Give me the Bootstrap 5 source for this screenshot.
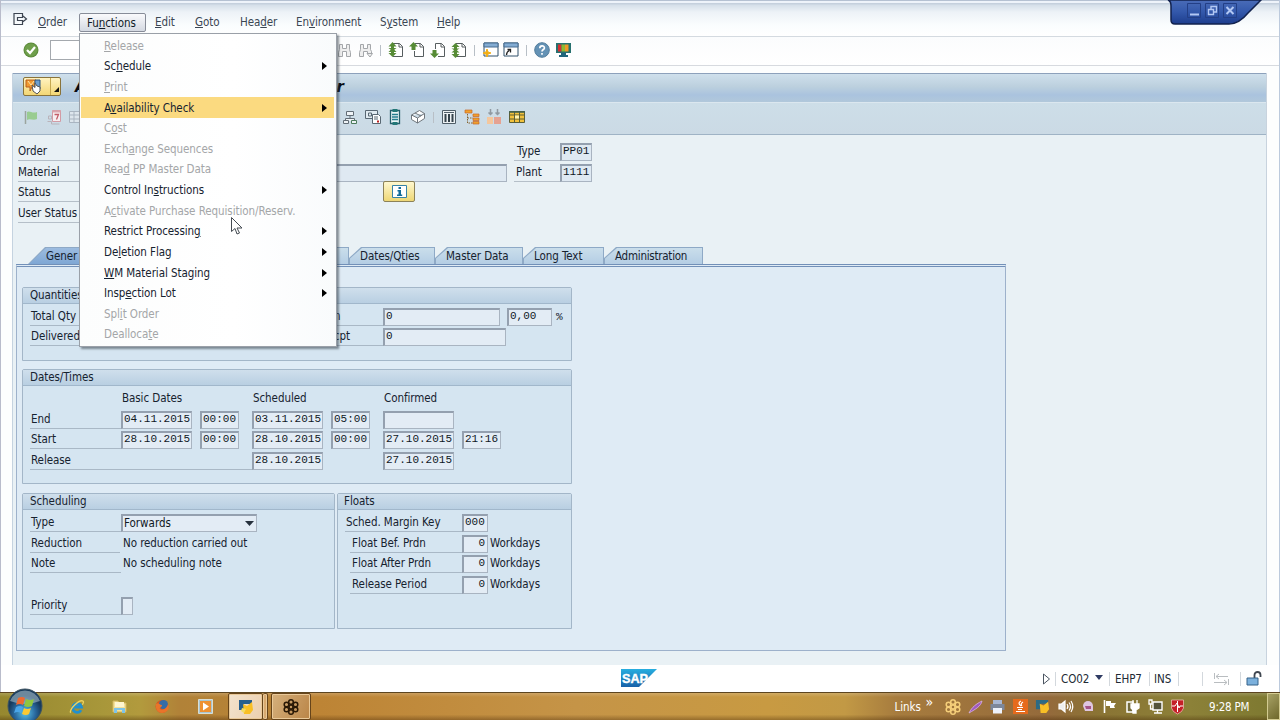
<!DOCTYPE html>
<html lang="en">
<head>
<meta charset="utf-8">
<meta name="viewport" content="width=device-width, initial-scale=1">
<title>Production Order</title>
<link href="https://cdn.jsdelivr.net/npm/bootstrap@5.3.0/dist/css/bootstrap.min.css" rel="stylesheet">
<style>
:root{--rh:20.62px;--line:#a3b6c8}
body{width:1280px;height:720px;overflow:hidden;background:#fdfefe;color:#16222f;font-family:"DejaVu Sans Condensed","DejaVu Sans",sans-serif;font-stretch:condensed;font-size:11.5px;letter-spacing:-.07px;line-height:16px;white-space:nowrap}
svg{display:block;flex:none;overflow:visible}
u{text-underline-offset:1px;text-decoration-thickness:1px}
.win{width:1280px;height:692px;border-left:1px solid #b9bccb;border-right:1px solid #bccadd}
.menustrip{height:37px;padding:10px 0 0 11px;background:linear-gradient(#b5c1d2 0 1px,#eef3fa 1px 3px,#c5d0dd 3px 4px,#d5dfe9 5px,#edf2f7 12px,#fafdfe 25px,#fff);border-bottom:1px solid #d4dae0;grid-template-columns:26px 41px 76px 40px 45px 56px 84px 57px 60px;display:grid;align-content:start;color:#3a4653}
.menustrip>span{padding-top:4px}
.menustrip .open{margin:3px 9px 0 0;padding:1px 0 0 7px;height:19px;line-height:17px;border:1px solid #878c98;border-radius:2px;background:linear-gradient(#fafafc,#d4d9e2);color:#111b28}
.toolstrip{height:29px;padding-bottom:2px;background:linear-gradient(#fbfcfd,#fff);border-bottom:1px solid #d7dadf}
.okcode{width:60px;height:20px;border:1px solid #a5a9ae;background:#fff}
.c1{width:20.8px}.c2{width:22.6px}.c1,.c2{display:flex;justify-content:center;flex:none}
.sep1{width:10.5px}.sep2{width:8.5px}
.sep1,.sep2{display:flex;justify-content:center;flex:none}
.sep1::after,.sep2::after{content:"";width:1px;height:11px;background:#b8bfc6}
.sheet{width:1255px;height:592px;margin:7px 0 0 11px;border-left:1px solid #c5d3e0;border-right:1px solid #c8d3de;background:#e9f1f5}
.caption-bar{height:30px;border-top:1px solid #8da1bb;background:linear-gradient(#cfe0ec,#bcd0de 45%,#aac3de 75%,#b1c8db);border-bottom:1px solid #dbe7ef}
.caption-bar i{font:italic bold 15px "DejaVu Sans","DejaVu Sans Condensed",sans-serif;color:#070b12;line-height:26px}
.appbar{height:32px;padding-bottom:3px;background:linear-gradient(#cddee8,#cbdae5);border-bottom:1px solid #9fb3c5}
.gos{width:38px;height:19px;border:1px solid #89733b;border-radius:2px;background:linear-gradient(#fff3c0,#f3d675)}
.gos>span{border-left:1px solid #c5a850;width:11px}
.frow{display:flex;height:var(--rh);align-items:flex-end}
.lab{height:18px;line-height:17px;border-bottom:1px solid #a9b8c6;flex:none;padding-left:1px}
.txt{line-height:17px;margin-bottom:1px}
.head-form .lab{border-color:#b5bfc8}
.fld{height:18px;border:1px solid #a9b4c1;border-top:2px solid #94a0af;border-left:2px solid #94a0af;background:#e3ecf5;flex:none;font:11px/13px "Liberation Mono",monospace;letter-spacing:0;padding-left:1px;color:#10181f}
.head-form .fld{background:#dfe9f2}
.w-date{width:71px}.w-time{width:39px}
.info{width:32px;height:21px;border:1px solid #8c8258;border-radius:2px;background:linear-gradient(#fff8cf,#eed775)}
.tabstrip{height:17px;padding-left:15px}
.tb{position:relative;height:17px;line-height:19px;z-index:0}
.tb::before,.tb::after{content:"";position:absolute;inset:0;clip-path:polygon(0 100%,0 65%,12px 0,100% 0,100% 100%);background:#8ea9c6;z-index:-2}
.tb::after{inset:1px 1px 0 1px;background:linear-gradient(#cadeeb,#b4cde4);z-index:-1}
.tb.on::before,.tb.on::after{clip-path:polygon(0 100%,17px 0,100% 0,100% 100%)}
.tb.on::after{background:linear-gradient(#9cbce0,#7fa7d4)}
.pane{width:990px;height:387px;margin-left:3px;border:1px solid #9db1cb;border-top:3px double #7290b8;background:#dfebf5;padding:20px 0 0 5px}
.grp{border:1px solid var(--line);border-radius:2px 2px 0 0;background:#d5e5f1}
.grp>h6{margin:0;height:16px;font-size:inherit;font-weight:400;line-height:14px;padding-left:7px;background:linear-gradient(#cfdfec,#b9cfe2);border-bottom:1px solid #a1b7cb}
.grp .frow{padding-left:7px}
.status{height:27px;background:#fff;display:grid;grid-template-columns:12px 54px 40px 29px 24px 38px 26px;justify-content:end;align-content:center;align-items:center;padding-right:13px;color:#222a35}
.statusrow{height:27px;background:#fff}
.st{border-left:1px solid #d3d8dd;height:14px;display:flex;align-items:center;padding-left:5px}
.pop{position:absolute;left:79px;top:33px;width:258px;height:314px;border:1px solid #9aa0a8;background:linear-gradient(90deg,#fcfdfd,#fff 60%,#f9fbfc);box-shadow:2px 2px 2px rgba(50,60,70,.55);padding:1.500px 2px 0 1px;z-index:5}
.pop>div{height:var(--rh);line-height:20px;padding:0 7px 0 23px;display:flex;justify-content:space-between;align-items:center}
.pop>div.off{color:#a4a6a8}
.pop>div.hot{background:#fbda80}
.pop .sub::after{content:"";border:4px solid transparent;border-left:5px solid #000;border-right:0}
.cursor{position:absolute;left:231px;top:217px;z-index:6}
.wctl{position:absolute;left:1168px;top:0;z-index:6}
.taskbar-os{position:relative;height:28px;border-top:1px solid #5c4520;background:linear-gradient(rgba(255,255,255,.18),rgba(255,255,255,0) 15% 80%,rgba(60,30,0,.35)),linear-gradient(90deg,#96882f,#a8973a 8%,#b29a3d 11%,#b18238 14%,#bd8435 25%,#c59447 45%,#c89a42 60%,#c29945 66%,#a77c3e 70%,#946a3b 82%,#8a7434 86%,#8c8138 93%,#7c7830)}
.tk{width:42.8px;display:flex;justify-content:center;align-items:center}
.tbtn{height:27px;border:1px solid #66441a;border-radius:2px;box-shadow:inset 0 0 0 1px #e9c999;display:flex;align-items:center;justify-content:center}
.tray>span{width:22.5px;display:flex;justify-content:center}
.orb{position:absolute;left:7px;top:-5px}
</style>
</head>
<body>
<div class="win">
 <nav class="menustrip">
  <svg width="15" height="13" viewBox="0 0 15 13" style="margin:3px 0 0 1px" fill="none" stroke="#3d4551" stroke-width="1.2"><path d="M9.500 3V.5H1v11h8.500V9M4.500 4.500h5V2.500L13.500 6 9.500 9V7.500h-5z"/></svg>
  <span><u>O</u>rder</span><span class="open">Fu<u>n</u>ctions</span><span><u>E</u>dit</span><span><u>G</u>oto</span><span>Hea<u>d</u>er</span><span>En<u>v</u>ironment</span><span>S<u>y</u>stem</span><span><u>H</u>elp</span>
 </nav>
 <div class="toolstrip d-flex align-items-center">
  <svg width="16" height="16" viewBox="0 0 16 16" style="margin-right:11px;margin-left:22px"><circle cx="8" cy="8" r="7.500" fill="#5d8b3c"/><circle cx="8" cy="8" r="6.500" fill="#6f9f4b"/><path d="M4 8l3 3 5-6" fill="none" stroke="#fff" stroke-width="2.200"/></svg>
  <div class="okcode"></div>
  <div class="d-flex align-items-center" style="margin-left:224px">
   <span class="c1"><svg width="15" height="15" viewBox="0 0 15 15" fill="#eee" stroke="#a4a7aa"><path d="M2.500 1.500h3v4h4v-4h3v5l1 3v4h-4v-5h-4v5h-4v-4l1-3z"/></svg></span>
   <span class="c1"><svg width="15" height="15" viewBox="0 0 15 15" fill="#eee" stroke="#a4a7aa"><path d="M2.500 1.500h3v4h4v-4h3v5l1 2v2h-4v-2h-4v5h-4v-4l1-3zM9 10.500h5.500L12 14z"/></svg></span>
   <span class="sep1"></span>
   <span class="c1"><svg width="16" height="16" viewBox="0 0 16 16"><path d="M5 1.500h6.500l3 3v10H5" fill="#fff" stroke="#565d5f"/><path d="M11 1.500v3.500h3.500" fill="none" stroke="#565d5f"/><path d="M4.500 0L8.500 4.500H6v1.500h2.500L4.500 9 .5 6H3V4.500H.5zM4.500 6L8.500 10H6v1h2.500L4.500 15l-4-4H3v-1H.5z" fill="#568b35"/></svg></span>
   <span class="c1"><svg width="16" height="16" viewBox="0 0 16 16"><path d="M6 1.500h5.500l3 3v10h-9V9" fill="#fff" stroke="#565d5f"/><path d="M11 1.500v3.500h3.500" fill="none" stroke="#565d5f"/><path d="M4.500 0L9 4.500H6.500V8h-4V4.500H0z" fill="#568b35"/></svg></span>
   <span class="c1"><svg width="16" height="16" viewBox="0 0 16 16"><path d="M5.500 7V1.500h6l3 3v10H8" fill="#fff" stroke="#565d5f"/><path d="M11 1.500v3.500h3.500" fill="none" stroke="#565d5f"/><path d="M4.500 16L9 11.500H6.500V8h-4v3.500H0z" fill="#568b35"/></svg></span>
   <span class="c1"><svg width="16" height="16" viewBox="0 0 16 16"><path d="M5 1.500h6.500l3 3v10H5" fill="#fff" stroke="#565d5f"/><path d="M11 1.500v3.500h3.500" fill="none" stroke="#565d5f"/><path d="M4.500 1L8.500 5H6v1.500h2.500L4.500 9 .5 6.500H3V5H.5zM4.500 7l4 3.500H6V12h2.500l-4 4-4-4H3v-1.500H.5z" fill="#568b35"/></svg></span>
   <span class="sep1"></span>
   <span class="c1"><svg width="17" height="16" viewBox="0 0 17 16"><path d="M2 1h14v13H2z" fill="#fff" stroke="#30516b"/><path d="M2 1h14v4H2z" fill="#83acd3" stroke="#466d91"/><path d="M5 7l1 3 3 1-3 1-1 3-1-3-3-1 3-1z" fill="#f2ae16" stroke="#f2ae16"/></svg></span>
   <span class="c1"><svg width="17" height="16" viewBox="0 0 17 16"><path d="M2 1h14v13H2z" fill="#fff" stroke="#30516b"/><path d="M2 1h14v4H2z" fill="#83acd3" stroke="#466d91"/><path d="M4.500 13c0-2 .5-3.500 3-4.500M5.500 7.500H8.500v3" fill="none" stroke="#222" stroke-width="1.300"/></svg></span>
   <span class="sep1"></span>
   <span class="c1"><svg width="16" height="16" viewBox="0 0 16 16"><circle cx="8" cy="8" r="7.300" fill="#6492b5" stroke="#527d9c"/><path d="M5.800 6.200c0-3 4.600-3 4.600-.3C10.400 7.600 8 7.500 8 9.600M8 11v1.800" fill="none" stroke="#fff" stroke-width="1.700"/></svg></span>
   <span class="c1"><svg width="17" height="16" viewBox="0 0 17 16"><path d="M1 1h15v10H1z" fill="#27716f"/><path d="M3 2.500h3.500v7H3z" fill="#d82f31"/><path d="M6.500 2.500H10v7H6.500z" fill="#8db834"/><path d="M10 2.500h3.500v7H10z" fill="#ef9a27"/><path d="M6 11h5v2h2v2H4v-2h2z" fill="#20657c"/></svg></span>
  </div>
 </div>

 <main class="sheet">
  <div class="caption-bar d-flex">
   <div class="gos d-flex" style="margin:3px 14px 0 10px"><svg width="26" height="17" viewBox="0 0 26 17"><path d="M2 2h10v7H8l-2 4V9H2z" fill="#f19a31" stroke="#b85f1d"/><path d="M4 3l3 4 3-4" fill="none" stroke="#fbe3a8"/><path d="M11 2h5v9h-5z" fill="#6d9fd0" stroke="#2f5680"/><path d="M8 7l3 2.500V5l2 3 3 1v4l-3 3-4-3z" fill="#fff" stroke="#555"/></svg><span class="d-flex"><svg width="10" height="17"><path d="M8 9v5H3z" fill="#111"/></svg></span></div>
   <i>A</i><i style="margin-left:250px">r</i>
  </div>
  <div class="appbar d-flex align-items-center">
   <div class="d-flex" style="margin-left:7px;width:319px">
    <span class="c2"><svg width="16" height="16" viewBox="0 0 16 16"><path d="M2.500 2v13" stroke="#9ba49e" stroke-width="1.500"/><path d="M4 3c3-2 5 2 10 0v7c-4 2-7-1-10 1z" fill="#99cc91"/></svg></span>
    <span class="c2"><svg width="16" height="16" viewBox="0 0 16 16"><path d="M6.500 1.500h8v11h-8z" fill="#f7eff1" stroke="#d29ba5"/><path d="M6.500 1.500h8v2h-8z" fill="#dba4ac"/><path d="M8.500 5.500h4l-2 5" fill="none" stroke="#c35e68" stroke-width="1.300"/><path d="M2.500 7h3v3h-3zM1.500 12.500h4v2.500h8" fill="none" stroke="#b9b3ba"/></svg></span>
    <span class="c2"><svg width="16" height="16" viewBox="0 0 16 16" fill="#dde6ed" stroke="#a9b5c1"><path d="M1.500 2.500h13v11h-13zM1.500 6h13M1.500 10h13M6 2.500v11"/></svg></span>
   </div>
   <span class="c2"><svg width="16" height="16" viewBox="0 0 16 16" fill="#eef3f6" stroke="#626d76"><path d="M4.500 2.500h7v4h-7zM8 6.500v3M3.500 12V9.500h9V12M1.500 11.500h5v3h-5z"/><path d="M9.500 11.500h5v3h-5z" stroke="#4c7b5b"/></svg></span>
   <span class="c2"><svg width="16" height="16" viewBox="0 0 16 16" fill="#e1ebf1" stroke="#596873"><path d="M.5 1.500h12v8H.5zM3.500 4h3v3h-3z"/><path d="M7.500 5.500h6l2 2v7h-8z" fill="#fff"/><path d="M9 8h4M9 10h4"/><path d="M12 12.500h2" stroke="#b22" stroke-width="2"/></svg></span>
   <span class="c2"><svg width="14" height="16" viewBox="0 0 14 16"><path d="M2.500 1.500h9v13h-9z" fill="#e9f4f5" stroke="#255e6c" stroke-width="1.300"/><path d="M4.500 0h5v3h-5zM4.500 13h5v3h-5z" fill="#277"/><path d="M4 5.500h6M4 8h6M4 10.500h6" stroke="#277e90" stroke-width="1.500"/></svg></span>
   <span class="c2"><svg width="16" height="16" viewBox="0 0 16 16" fill="#fff" stroke="#70777d"><path d="M1.500 6l8-4.500 5 3v5l-7 4.500-6-3.500zM1.500 6l6 3 7-4.500M7.500 9v5M5 4l6 3"/></svg></span>
   <span class="sep2"></span>
   <span class="c2"><svg width="16" height="16" viewBox="0 0 16 16"><path d="M1.500 1.500h13v13h-13z" fill="#edf2f4" stroke="#4f5e68"/><path d="M3 3.500h10" stroke="#4f5e68"/><path d="M4.500 5v8M8 5v8M11.500 5v8" stroke="#34424b" stroke-width="2"/></svg></span>
   <span class="c2"><svg width="16" height="16" viewBox="0 0 16 16"><path d="M3.500 5v9H9M3.500 9H9" fill="none" stroke="#85632f" stroke-dasharray="1.500 1"/><path d="M1 1h7v3H1zM9 5h6v2.500H9zM9 9h6v2.500H9zM9 12.500h6V15H9z" fill="#f0a02c" stroke="#c5672d" stroke-width=".7"/></svg></span>
   <span class="c2"><svg width="16" height="16" viewBox="0 0 16 16"><path d="M4.500 0v5M11.500 0v5M2.500 3.500l2 2 2-2M9.500 3.500l2 2 2-2" fill="none" stroke="#9099a1" stroke-width="1.500"/><path d="M1 8h6v7H1z" fill="#f4c79d"/><path d="M8 8h7v7H8z" fill="#e5a291"/></svg></span>
   <span class="c2"><svg width="16" height="16" viewBox="0 0 16 16"><path d="M.5 2.500h15v11H.5z" fill="#f2c13b" stroke="#5b5f36"/><path d="M1 6h14M1 10h14M5.500 2.500v11M10.500 2.500v11" stroke="#5b5f36"/><path d="M6 6.500h4v3H6z" fill="#fff3b0"/><path d="M0 3h16" stroke="#426252" stroke-width="1.600"/></svg></span>
  </div>

  <section class="head-form" style="padding:5.500px 0 0 5px;height:112px">
   <div class="frow"><span class="lab" style="width:90px;padding:0">Order</span><span class="lab" style="margin-left:406px;width:46px;padding-left:3px">Type</span><span class="fld" style="width:32px">PP01</span></div>
   <div class="frow"><span class="lab" style="width:90px;padding:0">Material</span><span class="fld" style="width:399px"></span><span class="lab" style="margin-left:7px;width:46px;padding-left:2px">Plant</span><span class="fld" style="width:32px">1111</span></div>
   <div class="frow"><span class="lab" style="width:90px;padding:0">Status</span><span class="info d-flex justify-content-center align-items-center" style="margin-left:275px"><svg width="15" height="13" viewBox="0 0 15 13"><path d="M.5.500h14v12H.5z" fill="#fff" stroke="#3883a6"/><path d="M6.500 2h2.500v2H6.500zM5.500 5H9v4.500h1.200V11H5V9.500h1.500v-3h-1z" fill="#126b99"/></svg></span></div>
   <div class="frow"><span class="lab" style="width:90px;padding:0">User Status</span></div>
  </section>

  <div class="tabstrip d-flex">
   <span class="tb on" style="width:90px;padding-left:18px">Gener</span>
   <span class="tb" style="width:231px"></span>
   <span class="tb" style="width:86px;padding-left:11px">Dates/Qties</span>
   <span class="tb" style="width:88px;padding-left:11px">Master Data</span>
   <span class="tb" style="width:81px;padding-left:11px">Long Text</span>
   <span class="tb" style="width:99px;padding-left:11px;letter-spacing:-.25px">Administration</span>
  </div>
  <div class="pane">
   <div style="width:550px">
    <section class="grp" style="height:74px">
     <h6>Quantities</h6>
     <div class="frow" style="margin-top:1px"><span class="lab" style="width:300px">Total Qty</span><span class="lab" style="width:53px;padding-left:4px">n</span><span class="fld" style="width:117px">0</span><span class="fld" style="width:45px;margin-left:7px">0,00</span><span class="ms-1" style="font:11px/17px 'Liberation Mono'">%</span></div>
     <div class="frow"><span class="lab" style="width:300px">Delivered</span><span class="lab" style="width:53px;padding-left:0"><span style="margin-left:-2px">xcpt</span></span><span class="fld" style="width:123px">0</span></div>
    </section>
    <section class="grp" style="height:115px;margin-top:8px">
     <h6>Dates/Times</h6>
     <div class="frow" style="margin-top:1.500px"><span class="txt" style="width:131px;margin-left:92px">Basic Dates</span><span class="txt" style="width:131px">Scheduled</span><span class="txt">Confirmed</span></div>
     <div class="frow"><span class="lab" style="width:91px">End</span><span class="fld w-date">04.11.2015</span><span class="fld w-time" style="margin-left:8px">00:00</span><span class="fld w-date" style="margin-left:13px">03.11.2015</span><span class="fld w-time" style="margin-left:8px">05:00</span><span class="fld w-date" style="margin-left:13px"></span></div>
     <div class="frow"><span class="lab" style="width:91px">Start</span><span class="fld w-date">28.10.2015</span><span class="fld w-time" style="margin-left:8px">00:00</span><span class="fld w-date" style="margin-left:13px">28.10.2015</span><span class="fld w-time" style="margin-left:8px">00:00</span><span class="fld w-date" style="margin-left:13px">27.10.2015</span><span class="fld w-time" style="margin-left:8px">21:16</span></div>
     <div class="frow"><span class="lab" style="width:222px">Release</span><span class="fld w-date">28.10.2015</span><span class="fld w-date" style="margin-left:60px">27.10.2015</span></div>
    </section>
    <div class="d-flex" style="margin-top:8.500px;gap:2px">
     <section class="grp" style="width:313px;height:136px">
      <h6>Scheduling</h6>
      <div class="frow" style="margin-top:2px"><span class="lab" style="width:91px">Type</span><span class="fld d-flex justify-content-between align-items-center" style="width:136px;font:inherit;line-height:13px;padding:0 2px 1px 1px">Forwards<svg width="9" height="5"><path d="M0 0h9L4.500 5z" fill="#27313d"/></svg></span></div>
      <div class="frow"><span class="lab" style="width:90px">Reduction</span><span class="txt" style="margin-left:3px">No reduction carried out</span></div>
      <div class="frow"><span class="lab" style="width:91px">Note</span><span class="txt" style="margin-left:2px">No scheduling note</span></div>
      <div class="frow"></div>
      <div class="frow"><span class="lab" style="width:91px">Priority</span><span class="fld" style="width:12px"></span></div>
     </section>
     <section class="grp" style="width:235px;height:136px">
      <h6 style="padding-left:6px">Floats</h6>
      <div class="frow" style="margin-top:2px"><span class="lab" style="width:117px">Sched. Margin Key</span><span class="fld" style="width:26px">000</span></div>
      <div class="frow"><span class="lab" style="width:112px;margin-left:5px;padding-left:2px">Float Bef. Prdn</span><span class="fld text-end" style="width:26px;padding-right:2px">0</span><span class="txt" style="margin-left:2px">Workdays</span></div>
      <div class="frow"><span class="lab" style="width:112px;margin-left:5px;padding-left:2px">Float After Prdn</span><span class="fld text-end" style="width:26px;padding-right:2px">0</span><span class="txt" style="margin-left:2px">Workdays</span></div>
      <div class="frow"><span class="lab" style="width:112px;margin-left:5px;padding-left:2px">Release Period</span><span class="fld text-end" style="width:26px;padding-right:2px">0</span><span class="txt" style="margin-left:2px">Workdays</span></div>
     </section>
    </div>
   </div>
  </div>
 </main>

 <footer class="statusrow d-flex">
  <svg width="38" height="19" viewBox="0 0 38 19" style="margin:4px 0 0 619px"><defs><linearGradient id="sg" x2="0" y2="1"><stop stop-color="#27aee0"/><stop offset="1" stop-color="#1861a8"/></linearGradient></defs><path d="M1 0h36L19 18H1z" fill="url(#sg)"/><text x="2" y="14" textLength="26" lengthAdjust="spacingAndGlyphs" letter-spacing="0" font-family="Liberation Sans" font-weight="700" font-size="13.500" fill="#fff" stroke="#fff" stroke-width=".4">SAP</text></svg>
  <div class="status ms-auto">
   <svg width="8" height="12"><path d="M.5 1l6 5-6 5z" fill="#fff" stroke="#4b5562"/></svg>
   <span class="st">CO02<svg width="8" height="5" style="margin:-3px 0 0 6px"><path d="M0 0h8L4 5z" fill="#2f3b63"/></svg></span>
   <span class="st">EHP7</span><span class="st" style="padding-left:4px">INS</span><span class="st"></span>
   <span class="st" style="padding-left:11px"><svg width="15" height="12" fill="none" stroke="#b9bdc0"><path d="M.5 0v6M2 3.500h12M5 1L2 3.500 5 6M14.500 6v6M0 9.500h13M10 7l3 2.500-3 2.500"/></svg></span>
   <span class="st"><svg width="16" height="15" viewBox="0 0 16 15"><path d="M8.500 7V4c0-4 6-4 6 0v2" fill="none" stroke="#3f4650" stroke-width="1.800"/><path d="M1 7h11v7H1z" fill="#7bb0dc" stroke="#376289"/></svg></span>
  </div>
 </footer>
</div>

<footer class="taskbar-os d-flex">
 <svg class="orb" width="36" height="36" viewBox="0 0 36 36"><defs><radialGradient id="ob" cy=".7"><stop stop-color="#5cc6ea"/><stop offset=".6" stop-color="#2a6aa0"/><stop offset="1" stop-color="#173a5c"/></radialGradient></defs><circle cx="18" cy="18" r="17" fill="url(#ob)" stroke="#3d5360"/><path d="M3 13a16 16 0 0 1 30 0q-15 6-30 0z" fill="#d5e9ee" opacity=".45"/><path d="M11 10q4-2 7 0l-2 7q-3-2-7 0z" fill="#ee6a31"/><path d="M19 11q4 2 8 0l-2 7q-4 2-8 0z" fill="#8fc640"/><path d="M9 19q4-2 7 0l-2 6q-3-2-7 0z" fill="#4aa5e8"/><path d="M17 20q3 2 7 0l-2 6q-3 2-7 0z" fill="#fcc933"/></svg>
 <div class="d-flex" style="margin-left:56px">
  <span class="tk"><svg width="16" height="16" viewBox="0 0 18 17"><path d="M13.500 12A5 5 0 1 1 14 8.500H6" fill="none" stroke="#2190d0" stroke-width="3.200"/><path d="M2 15C-1 12 12-1 16 2c1 1 0 2-1 4" fill="none" stroke="#f0d35c" stroke-width="1.500"/></svg></span>
  <span class="tk"><svg width="16" height="16" viewBox="0 0 16 16"><path d="M1 2h5l1 2h7v9H1z" fill="#f4e29b" stroke="#d2b65d"/><path d="M3 3h9v5H3z" fill="#fff6d0"/><path d="M2 14V9h11v5h-3v-3H5v3z" fill="#7fc4e8"/></svg></span>
  <span class="tk"><svg width="15" height="15" viewBox="0 0 15 15"><circle cx="7" cy="7.500" r="6.500" fill="#d9561d"/><circle cx="8.500" cy="5.500" r="4.500" fill="#346ca7"/><path d="M1 5c3-2 3 1 6 1 0 3-3 2-2 4 3 2 7-1 8-5 3 6-3 9-6 9C3 14 0 10 1 5z" fill="#e9742a"/></svg></span>
  <span class="tk"><svg width="15" height="15" viewBox="0 0 15 15"><path d="M.5.500h14v14H.5z" fill="#a9c5d0" stroke="#d8ded6"/><path d="M2 2h11v11H2z" fill="#ee9132"/><path d="M5 3.500l6 4-6 4z" fill="#fff"/></svg></span>
 </div>
 <div class="tbtn" style="width:35px;margin-left:1px;background:linear-gradient(115deg,#f2e3ce,#eccfae)"><svg width="16" height="16" viewBox="0 0 16 16"><path d="M1 1h13v4H6v6H1z" fill="#275f8e"/><path d="M5 5l4 2 5-4 1 8-3 4H6z" fill="#f9bf25"/><path d="M4 9l4 1-2 4-3-2z" fill="#f3dc61"/></svg></div>
 <div class="tbtn" style="width:5px;border-left:0;background:#d8aa70"></div>
 <div class="tbtn" style="width:40px;margin-left:3px;background:linear-gradient(115deg,#d5b07c,#ba8547)"><svg width="16" height="16" viewBox="-8 -8 16 16" fill="none" stroke="#291805" stroke-width="1.500"><circle r="2"/><circle cy="-5" r="2.300"/><circle cy="5" r="2.300"/><circle cx="4.500" cy="-2.500" r="2.300"/><circle cx="-4.500" cy="-2.500" r="2.300"/><circle cx="4.500" cy="2.500" r="2.300"/><circle cx="-4.500" cy="2.500" r="2.300"/></svg></div>
 <div class="ms-auto d-flex align-items-center text-white tray">
  <div style="width:31px">Links</div><div style="width:16px;font-size:14px;margin-top:-10px">»</div>
  <span><svg width="16" height="16" viewBox="-8 -8 16 16" fill="none" stroke="#f6cf7a" stroke-width="1.500"><circle r="2"/><circle cy="-5" r="2.300"/><circle cy="5" r="2.300"/><circle cx="4.500" cy="-2.500" r="2.300"/><circle cx="-4.500" cy="-2.500" r="2.300"/><circle cx="4.500" cy="2.500" r="2.300"/><circle cx="-4.500" cy="2.500" r="2.300"/></svg></span>
  <span><svg width="15" height="14"><path d="M1 13C4 7 8 4 14 1c-1 5-6 8-13 12z" fill="#a05ac0" stroke="#d9b4e6" stroke-width=".8"/></svg></span>
  <span><svg width="15" height="14" viewBox="0 0 15 14"><path d="M3 0h9v4H3z" fill="#a8b6d2"/><path d="M.5 4h14v6H.5z" fill="#7d879b"/><path d="M3 8h9v5.500H3z" fill="#eef2fb"/></svg></span>
  <span><svg width="15" height="15" viewBox="0 0 15 15"><path d="M0 0h15v15H0z" fill="#e66a1c"/><path d="M8 2q-4 2 0 5M10 3q-3 2-1 4M4 8.500h6M5 10.500h4M3 12.500h9" fill="none" stroke="#fff" stroke-width="1.200"/></svg></span>
  <span><svg width="15" height="15" viewBox="0 0 16 16"><path d="M1 1h13v4H6v6H1z" fill="#2c6a84"/><path d="M5 5l4 2 5-4 1 8-3 4H6z" fill="#f9bf25"/></svg></span>
  <span><svg width="15" height="13" viewBox="0 0 15 13" fill="none" stroke="#fff" stroke-width="1.200"><path d="M1 4h2.500L7 1v11L3.500 9H1z" fill="#eee"/><path d="M9 4q2 2.500 0 5M11 2.500q3 4 0 8M13 1q3.500 5.500 0 11"/></svg></span>
  <span><svg width="12" height="12" viewBox="0 0 12 12"><path d="M1 5a5 5 0 0 1 10 0v5H3z" fill="#dfc6e1"/><path d="M3 5h6v3H4z" fill="#a55489"/></svg></span>
  <span><svg width="14" height="15" viewBox="0 0 14 15"><path d="M1.500 1v13" stroke="#fff" stroke-width="1.600"/><path d="M3 2h5v2h5l-2 3 1 2H7V7H3z" fill="#fff"/></svg></span>
  <span><svg width="14" height="15" viewBox="0 0 14 15"><path d="M1 3h6v10H1z" fill="#746c3d" stroke="#fff" stroke-width="1.500"/><path d="M5 5h8v4l-3 2v3H7v-3L5 9zM7 1v4M11 1v4" fill="#fff" stroke="#fff" stroke-width="1.300"/></svg></span>
  <span><svg width="15" height="15" viewBox="0 0 15 15"><path d="M5 3h9v8H5z" fill="#55543b" stroke="#fff" stroke-width="1.400"/><path d="M6 14h8M9.500 11v3M1 1h3v4H1zM2.500 5v5H5" fill="none" stroke="#fff" stroke-width="1.300"/></svg></span>
  <span><svg width="13" height="15" viewBox="0 0 13 15"><path d="M.5 1h12v8q-1 4-6 6-5-2-6-6z" fill="#c51e27" stroke="#f1c8bd" stroke-width=".7"/><path d="M6.500 2v11M1 7h3l2-3 2 5 1-2h3" fill="none" stroke="#fff"/></svg></span>
  <div style="width:58px;margin-left:20px;letter-spacing:-.2px">9:28 PM</div>
  <div style="width:13px;height:27px;border:1px solid #d3cb91;background:linear-gradient(135deg,#a8a266,#6e672b)"></div>
 </div>
</footer>

<div class="pop">
 <div class="off"><span><u>R</u>elease</span></div>
 <div class="sub"><span>Sc<u>h</u>edule</span></div>
 <div class="off"><span><u>P</u>rint</span></div>
 <div class="sub hot"><span>A<u>v</u>ailability Check</span></div>
 <div class="off"><span>C<u>o</u>st</span></div>
 <div class="off"><span>Exch<u>a</u>nge Sequences</span></div>
 <div class="off"><span>Rea<u>d</u> PP Master Data</span></div>
 <div class="sub"><span>Control In<u>s</u>tructions</span></div>
 <div class="off"><span>A<u>c</u>tivate Purchase Requisition/Reserv.</span></div>
 <div class="sub"><span>Restrict Processin<u>g</u></span></div>
 <div class="sub"><span>De<u>l</u>etion Flag</span></div>
 <div class="sub"><span><u>W</u>M Material Staging</span></div>
 <div class="sub"><span>Insp<u>e</u>ction Lot</span></div>
 <div class="off"><span>Spl<u>i</u>t Order</span></div>
 <div class="off"><span>Dealloca<u>t</u>e</span></div>
</div>
<svg class="cursor" width="12" height="18" viewBox="0 0 12 18"><path d="M.5.500v14l3.500-3 2 5.500 2.500-1-2.500-5h5z" fill="#fff" stroke="#444b52"/></svg>
<svg class="wctl" width="96" height="26" viewBox="0 0 96 26"><defs><linearGradient id="wg" x2="0" y2="1"><stop stop-color="#4a6cb8"/><stop offset=".5" stop-color="#3358ab"/><stop offset="1" stop-color="#1d3d8d"/></linearGradient></defs><path d="M0 0q3 1 3 6v14q0 4 4 4h54q10 0 19-11L93 0z" fill="url(#wg)" stroke="#12224e" stroke-width="1.500"/><g fill="none" stroke="#233f86"><path d="M19.500 3.500h13v14h-13zM37.500 3.500h13v14h-13zM55.500 3.500h13v14h-13z"/></g><g fill="none" stroke="#b3c8f4" stroke-width="1.400"><path d="M22 14.500h9" stroke-width="2"/><path d="M40.500 9.500h5v5h-5zM43 9V6.500h5.500v5.500H46"/><path d="M58.500 7l7 7M65.500 7l-7 7" stroke-width="2"/></g></svg>
<script src="https://cdn.jsdelivr.net/npm/bootstrap@5.3.0/dist/js/bootstrap.bundle.min.js"></script>
</body>
</html>
